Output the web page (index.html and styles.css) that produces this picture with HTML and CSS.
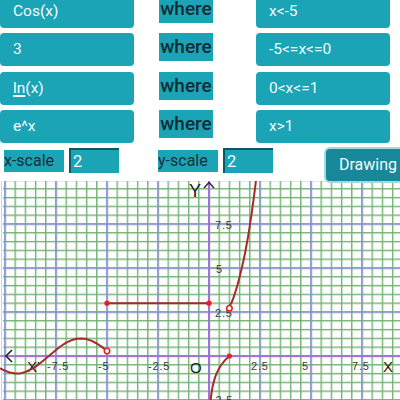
FILE: index.html
```html
<!DOCTYPE html>
<html>
<head>
<meta charset="utf-8">
<link rel="stylesheet" href="styles.css">
</head>
<body>
<div class="page">
  <div class="rows">
    <div class="row">
      <div class="btn fn">Cos(x)</div>
      <div class="where">where</div>
      <div class="btn cond">x&lt;-5</div>
    </div>
    <div class="row">
      <div class="btn fn">3</div>
      <div class="where">where</div>
      <div class="btn cond">-5&lt;=x&lt;=0</div>
    </div>
    <div class="row">
      <div class="btn fn"><u>ln</u>(x)</div>
      <div class="where">where</div>
      <div class="btn cond">0&lt;x&lt;=1</div>
    </div>
    <div class="row">
      <div class="btn fn">e^x</div>
      <div class="where">where</div>
      <div class="btn cond">x&gt;1</div>
    </div>
  </div>
  <div class="controls">
    <span class="lbl">x-scale</span>
    <span class="inp">2</span>
    <span class="lbl lbl-y">y-scale</span>
    <span class="inp">2</span>
    <button class="draw">Drawing</button>
  </div>
  <svg class="graph" width="400" height="219" viewBox="0 181 400 219" xmlns="http://www.w3.org/2000/svg">
    <defs>
      <pattern id="minor" patternUnits="userSpaceOnUse" x="208.3" y="355.3" width="10.2" height="8.8">
        <rect x="0" y="0" width="1.4" height="8.8" fill="#72b272"/>
        <rect x="0" y="0" width="10.2" height="1.4" fill="#72b272"/>
      </pattern>
      <pattern id="major" patternUnits="userSpaceOnUse" x="208.3" y="355.3" width="51" height="44">
        <rect x="0" y="0" width="1.4" height="44" fill="#8a8af0"/>
        <rect x="0" y="0" width="51" height="1.4" fill="#8a8af0"/>
      </pattern>
    </defs>
    <rect x="0" y="181" width="400" height="219" fill="#ffffff"/>
    <rect x="3" y="181" width="397" height="219" fill="url(#minor)"/>
    <rect x="3" y="181" width="397" height="219" fill="url(#major)"/>
    <line x1="1.5" y1="181" x2="1.5" y2="400" stroke="#d4d4d4" stroke-width="1"/>
    <line x1="0" y1="356" x2="400" y2="356" stroke="#a46ad4" stroke-width="1.6"/>
    <line x1="209" y1="183" x2="209" y2="400" stroke="#a46ad4" stroke-width="1.6"/>
    <polyline points="204,188 209,182.5 214,188" fill="none" stroke="#3c2c52" stroke-width="1.6"/>
    <polyline points="12,350 6,356 12,362" fill="none" stroke="#222" stroke-width="1.6"/>

    <g class="lbl-small">
      <text x="215" y="229">7.5</text>
      <text x="216" y="273">5</text>
      <text x="215" y="317">2.5</text>
      <text x="211" y="404">-2.5</text>
      <text x="47" y="370">-7.5</text>
      <text x="98" y="370">-5</text>
      <text x="148" y="370">-2.5</text>
      <text x="251" y="370">2.5</text>
      <text x="302" y="370">5</text>
      <text x="352" y="370">7.5</text>
    </g>
    <g class="lbl-axis">
      <text x="27" y="372">X'</text>
      <text x="383" y="372">X</text>
      <text x="190" y="373">O</text>
      <text x="189" y="197" class="ylab">Y</text>
    </g>

    <g fill="none" stroke="#a42a2c" stroke-width="2" stroke-linejoin="round" stroke-linecap="round">
      <polyline points="0.9,368.6 5,370.8 10.1,372.6 15.2,373.6 20.3,373.4 25.4,372.0 30.5,369.7 35.6,366.6 40.7,362.8 45.8,358.6 50.9,354.2 56,349.9 61.1,346.0 66.2,342.7 71.3,340.3 76.4,338.8 81.5,338.4 86.6,339.1 91.7,340.9 96.8,343.5 101.9,346.9 105.5,349.8"/>
      <line x1="107" y1="303.2" x2="209" y2="303.2"/>
      <polyline points="210.6,400.5 211,396.5 212.1,389.4 213.1,384.3 215.1,377.2 217.2,372.1 219.2,368.2 221.2,365 223.3,362.3 225.3,359.9 227.4,357.9 229.4,356"/>
      <polyline points="229.6,305.5 231.5,302.9 233.5,297.6 235.5,291.5 237.6,284.6 239.6,277.1 241.6,268.8 243.7,259.7 245.7,249.5 247.8,238.3 249.8,225.9 251.8,212.3 253.9,197.2 255.4,185.4 256.9,171.4"/>
    </g>
    <g fill="#e8211f">
      <circle cx="107" cy="303.2" r="2.6"/>
      <circle cx="209" cy="303.2" r="2.6"/>
      <circle cx="229.4" cy="356" r="2.6"/>
    </g>
    <g fill="#ffffff" stroke="#e8211f" stroke-width="1.6">
      <circle cx="107" cy="351" r="2.7"/>
      <circle cx="229.4" cy="308.2" r="2.7"/>
    </g>
  </svg>
</div>
</body>
</html>
```
FILE: styles.css
```css
html, body {
  margin: 0;
  padding: 0;
  background: #ffffff;
  overflow: hidden;
}

.page {
  width: 400px;
  height: 400px;
  overflow: hidden;
  font-family: Roboto, "Liberation Sans", sans-serif;
}

.rows {
  display: flex;
  flex-direction: column;
  gap: 5.5px;
  margin-top: -5.5px;
}

.row {
  display: flex;
  align-items: flex-start;
  height: 33px;
}

.btn {
  box-sizing: border-box;
  width: 134px;
  height: 33px;
  background: #1ba3b6;
  color: #f4fbfc;
  border-radius: 4px;
  font-size: 15.5px;
  line-height: 33px;
  padding-left: 13px;
  white-space: nowrap;
}

.btn u {
  text-decoration-thickness: 1.5px;
  text-underline-offset: 2px;
}

.where {
  width: 54px;
  height: 28px;
  margin-left: 25px;
  background: #1ba3b6;
  color: #142c36;
  font-size: 19px;
  font-weight: 500;
  line-height: 28px;
  text-align: center;
  white-space: nowrap;
}

.cond {
  margin-left: 43px;
}

.controls {
  display: flex;
  align-items: flex-start;
  height: 34px;
  margin-top: 4px;
}

.lbl {
  flex-shrink: 0;
  width: 60px;
  height: 22px;
  margin-top: 3px;
  margin-left: 4px;
  background: #1ba3b6;
  color: #1a2f38;
  font-size: 16px;
  line-height: 22px;
  white-space: nowrap;
}

.lbl-y {
  margin-left: 39px;
}

.inp {
  flex-shrink: 0;
  box-sizing: border-box;
  width: 50px;
  height: 25.6px;
  margin-top: 0.7px;
  margin-left: 5px;
  background: #1ba3b6;
  border-top: 2px solid #0e5866;
  border-left: 2px solid #0e5866;
  color: #f4fbfc;
  font-size: 16.5px;
  line-height: 23px;
  padding-left: 2px;
}

.draw {
  position: relative;
  z-index: 1;
  flex-shrink: 0;
  box-sizing: border-box;
  width: 92px;
  height: 35.5px;
  margin-left: 51px;
  padding: 0 0 0 13px;
  text-align: left;
  background: #17889a;
  border: 2px solid #a6d7df;
  border-radius: 6px;
  color: #f4fbfc;
  font-family: Roboto, "Liberation Sans", sans-serif;
  font-size: 16px;
}

.graph {
  display: block;
}

.lbl-small text {
  font-family: "Liberation Sans", sans-serif;
  font-size: 11px;
  letter-spacing: 0.8px;
  fill: #3a3a3a;
}

.lbl-axis text {
  font-family: "Liberation Sans", sans-serif;
  font-size: 15px;
  fill: #1e1e1e;
}

.lbl-axis .ylab {
  font-size: 18px;
}
```
